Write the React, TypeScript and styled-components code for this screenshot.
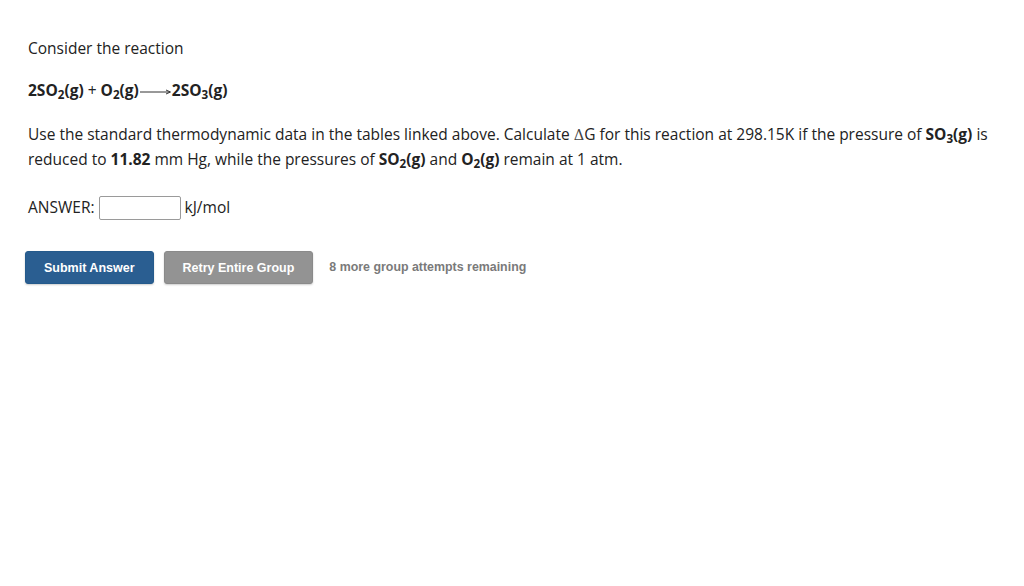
import React from 'react';
import styled, { createGlobalStyle } from 'styled-components';

const GlobalStyle = createGlobalStyle`
  html, body {
    margin: 0;
    padding: 0;
    background: #fff;
  }
  body {
    font-family: 'Open Sans', 'Liberation Sans', sans-serif;
    color: #222;
  }
`;

const Page = styled.div`
  padding: 36px 28px;
  font-size: 15.5px;
  line-height: 25px;
`;

const Para = styled.p<{ $gap?: number }>`
  margin: 0 0 ${(p) => p.$gap ?? 16}px;
`;

// subscript shifted visually so it doesn't grow the line box
const Sub = styled.span`
  font-size: 0.75em;
  line-height: 0;
  position: relative;
  top: 0.3em;
`;

const Arrow = styled.span`
  display: inline-block;
  vertical-align: middle;
  line-height: 0;
  margin: 0 1px;
  svg {
    display: block;
  }
`;

const Delta = styled.span`
  font-family: 'DejaVu Serif', 'Liberation Serif', serif;
  line-height: 0;
  color: #444;
  font-size: 14.5px;
`;

const AnswerRow = styled.div`
  display: flex;
  align-items: center;
  gap: 4px;
  margin: 23px 0 31px;
`;

const AnswerInput = styled.input`
  width: 82px;
  height: 24px;
  box-sizing: border-box;
  border: 1px solid #9a9a9a;
  border-radius: 2px;
  padding: 0 4px;
`;

const ButtonRow = styled.div`
  display: flex;
  align-items: center;
  gap: 10px;
  margin-left: -3px;
`;

const Button = styled.button<{ $variant: 'primary' | 'muted' }>`
  font-family: 'Liberation Sans', Arial, sans-serif;
  font-weight: bold;
  font-size: 12.5px;
  color: #fff;
  border: 1px solid ${(p) => (p.$variant === 'primary' ? '#245a8c' : '#8a8a8a')};
  background: ${(p) => (p.$variant === 'primary' ? '#2a5e91' : '#939393')};
  border-radius: 3px;
  height: 33px;
  padding: 0 18px;
  box-shadow: 0 1px 2px rgba(0, 0, 0, 0.2);
`;

const Attempts = styled.span`
  font-family: 'Liberation Sans', Arial, sans-serif;
  font-weight: bold;
  font-size: 12.4px;
  color: #7a7a7a;
  margin-left: 6px;
`;

const App: React.FC = () => {
  return (
    <>
      <GlobalStyle />
      <Page>
        <Para $gap={17}>Consider the reaction</Para>
        <Para $gap={19}>
          <b>
            2SO<Sub>2</Sub>(g)
          </b>{' '}
          +{' '}
          <b>
            O<Sub>2</Sub>(g)
          </b>
          <Arrow>
            <svg width="31" height="6" viewBox="0 0 31 6">
              <line x1="0" y1="3" x2="30" y2="3" stroke="#333" strokeWidth="1" />
              <path d="M26 1 L30.5 3 L26 5" fill="none" stroke="#333" strokeWidth="1" />
            </svg>
          </Arrow>
          <b>
            2SO<Sub>3</Sub>(g)
          </b>
        </Para>
        <Para $gap={0}>
          Use the standard thermodynamic data in the tables linked above. Calculate <Delta>Δ</Delta>G for
          this reaction at 298.15K if the pressure of{' '}
          <b>
            SO<Sub>3</Sub>(g)
          </b>{' '}
          is reduced to <b>11.82</b> mm Hg, while the pressures of{' '}
          <b>
            SO<Sub>2</Sub>(g)
          </b>{' '}
          and{' '}
          <b>
            O<Sub>2</Sub>(g)
          </b>{' '}
          remain at 1 atm.
        </Para>
        <AnswerRow>
          <span>ANSWER:</span>
          <AnswerInput type="text" />
          <span>kJ/mol</span>
        </AnswerRow>
        <ButtonRow>
          <Button $variant="primary">Submit Answer</Button>
          <Button $variant="muted">Retry Entire Group</Button>
          <Attempts>8 more group attempts remaining</Attempts>
        </ButtonRow>
      </Page>
    </>
  );
};

export default App;
